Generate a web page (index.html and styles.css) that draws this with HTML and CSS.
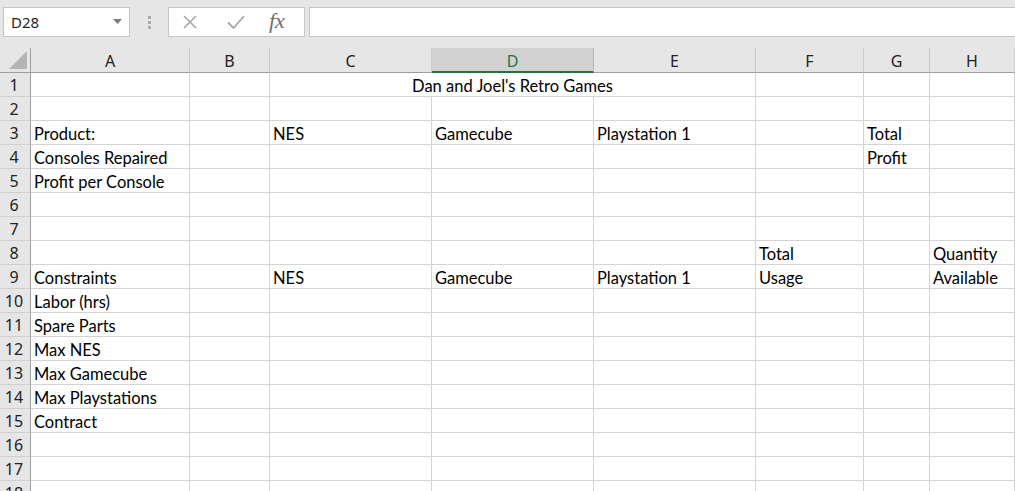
FILE: index.html
```html
<!DOCTYPE html>
<html>
<head>
<meta charset="utf-8">
<link rel="stylesheet" href="styles.css">
</head>
<body>
<div class="app">
  <div class="fbar">
    <div class="namebox">
      <span class="ref">D28</span>
      <svg class="dd" width="9" height="5" viewBox="0 0 9 5"><path d="M0 0H9L4.5 5Z" fill="#7a7a7a"/></svg>
    </div>
    <div class="grip"><i></i><i></i><i></i></div>
    <div class="fbtns">
      <svg class="ic" width="16" height="16" viewBox="0 0 16 16"><path d="M2 2L14 14M14 2L2 14" stroke="#a6a6a6" stroke-width="1.6" fill="none"/></svg>
      <svg class="ic" width="18" height="16" viewBox="0 0 18 16"><path d="M1 8.5L6.5 14L17 2" stroke="#a6a6a6" stroke-width="1.8" fill="none"/></svg>
      <span class="fx">fx</span>
    </div>
    <div class="finput"></div>
  </div>
  <div class="sheet">
    <div class="corner"><svg width="18" height="18" viewBox="0 0 18 18"><path d="M18 0V18H0Z" fill="#b4b4b4"/></svg></div>
    <div class="ch">A</div><div class="ch">B</div><div class="ch">C</div><div class="ch sel">D</div><div class="ch">E</div><div class="ch">F</div><div class="ch">G</div><div class="ch last">H</div>

    <div class="rh">1</div><div class="c"></div><div class="c"></div><div class="c title">Dan and Joel's Retro Games</div><div class="c"></div><div class="c"></div><div class="c last"></div>
    <div class="rh">2</div><div class="c"></div><div class="c"></div><div class="c"></div><div class="c"></div><div class="c"></div><div class="c"></div><div class="c"></div><div class="c last"></div>
    <div class="rh">3</div><div class="c">Product:</div><div class="c"></div><div class="c">NES</div><div class="c">Gamecube</div><div class="c">Playstation 1</div><div class="c"></div><div class="c">Total</div><div class="c last"></div>
    <div class="rh">4</div><div class="c">Consoles Repaired</div><div class="c"></div><div class="c"></div><div class="c"></div><div class="c"></div><div class="c"></div><div class="c">Profit</div><div class="c last"></div>
    <div class="rh">5</div><div class="c">Profit per Console</div><div class="c"></div><div class="c"></div><div class="c"></div><div class="c"></div><div class="c"></div><div class="c"></div><div class="c last"></div>
    <div class="rh">6</div><div class="c"></div><div class="c"></div><div class="c"></div><div class="c"></div><div class="c"></div><div class="c"></div><div class="c"></div><div class="c last"></div>
    <div class="rh">7</div><div class="c"></div><div class="c"></div><div class="c"></div><div class="c"></div><div class="c"></div><div class="c"></div><div class="c"></div><div class="c last"></div>
    <div class="rh">8</div><div class="c"></div><div class="c"></div><div class="c"></div><div class="c"></div><div class="c"></div><div class="c">Total</div><div class="c"></div><div class="c last">Quantity</div>
    <div class="rh">9</div><div class="c">Constraints</div><div class="c"></div><div class="c">NES</div><div class="c">Gamecube</div><div class="c">Playstation 1</div><div class="c">Usage</div><div class="c"></div><div class="c last">Available</div>
    <div class="rh">10</div><div class="c">Labor (hrs)</div><div class="c"></div><div class="c"></div><div class="c"></div><div class="c"></div><div class="c"></div><div class="c"></div><div class="c last"></div>
    <div class="rh">11</div><div class="c">Spare Parts</div><div class="c"></div><div class="c"></div><div class="c"></div><div class="c"></div><div class="c"></div><div class="c"></div><div class="c last"></div>
    <div class="rh">12</div><div class="c">Max NES</div><div class="c"></div><div class="c"></div><div class="c"></div><div class="c"></div><div class="c"></div><div class="c"></div><div class="c last"></div>
    <div class="rh">13</div><div class="c">Max Gamecube</div><div class="c"></div><div class="c"></div><div class="c"></div><div class="c"></div><div class="c"></div><div class="c"></div><div class="c last"></div>
    <div class="rh">14</div><div class="c">Max Playstations</div><div class="c"></div><div class="c"></div><div class="c"></div><div class="c"></div><div class="c"></div><div class="c"></div><div class="c last"></div>
    <div class="rh">15</div><div class="c">Contract</div><div class="c"></div><div class="c"></div><div class="c"></div><div class="c"></div><div class="c"></div><div class="c"></div><div class="c last"></div>
    <div class="rh">16</div><div class="c"></div><div class="c"></div><div class="c"></div><div class="c"></div><div class="c"></div><div class="c"></div><div class="c"></div><div class="c last"></div>
    <div class="rh">17</div><div class="c"></div><div class="c"></div><div class="c"></div><div class="c"></div><div class="c"></div><div class="c"></div><div class="c"></div><div class="c last"></div>
    <div class="rh">18</div><div class="c"></div><div class="c"></div><div class="c"></div><div class="c"></div><div class="c"></div><div class="c"></div><div class="c"></div><div class="c last"></div>
  </div>
</div>
</body>
</html>
```
FILE: styles.css
```css
* { box-sizing: border-box; }
html, body { margin: 0; padding: 0; }
body {
  width: 1015px;
  height: 491px;
  overflow: hidden;
  background: #ffffff;
  font-family: "Noto Sans", "Open Sans", sans-serif;
}
.app { width: 1015px; }
.fbar {
  height: 48px;
  background: #e6e6e6;
  display: flex;
  align-items: flex-start;
  padding-top: 7px;
  padding-left: 3px;
}
.namebox {
  width: 127px;
  height: 30px;
  background: #fff;
  border: 1px solid #c6c6c6;
  display: flex;
  align-items: center;
  justify-content: space-between;
  padding: 0 7px 0 7px;
}
.ref { font-size: 15px; color: #262626; font-family: "Noto Sans", sans-serif; }
.dd { margin-top: -1px; }
.grip {
  width: 38px;
  height: 30px;
  display: flex;
  flex-direction: column;
  align-items: center;
  justify-content: center;
  gap: 2px;
}
.grip i { display: block; width: 3px; height: 3px; background: #aaa; }
.fbtns {
  width: 137px;
  height: 30px;
  background: #fff;
  border: 1px solid #c6c6c6;
  display: flex;
  align-items: center;
  padding-left: 13px;
}
.fbtns .ic:first-child { margin-right: 29px; }
.fbtns .ic:nth-child(2) { margin-right: 24px; }
.fx {
  font-family: "Liberation Serif", "DejaVu Serif", serif;
  font-style: italic;
  font-size: 22px;
  color: #6e6e6e;
  letter-spacing: 0;
  margin-top: -3px;
}
.finput {
  margin-left: 4px;
  flex: 1;
  height: 30px;
  background: #fff;
  border: 1px solid #c6c6c6;
  border-right: none;
}
.sheet {
  display: grid;
  grid-template-columns: 31px 159px 80px 162px 162px 162px 108px 66px 85px;
  grid-template-rows: 25px repeat(18, 24px);
  font-family: "Lato", "Open Sans", sans-serif;
  font-size: 16.5px;
  color: #000;
}
.corner {
  background: #e6e6e6;
  border-right: 1px solid #9e9e9e;
  border-bottom: 1px solid #9e9e9e;
  display: flex;
  align-items: flex-end;
  justify-content: flex-end;
  padding: 0 3px 3px 0;
}
.ch {
  background: #e6e6e6;
  border-bottom: 1px solid #9e9e9e;
  border-right: 1px solid #c9c9c9;
  display: flex;
  align-items: center;
  justify-content: center;
  font-family: "Noto Sans", "Open Sans", sans-serif;
  font-size: 16px;
  color: #222;
  padding-top: 1px;
  background-clip: padding-box;
}
.ch.sel {
  background: #d2d2d2;
  border-bottom: 2px solid #217346;
  color: #217346;
  border-right-color: #b4b4b4;
  padding-top: 2px;
}
.ch.last { border-right-color: #c9c9c9; }
.rh {
  background: #e6e6e6;
  border-right: 1px solid #9e9e9e;
  border-bottom: 1px solid #cfcfcf;
  display: flex;
  align-items: center;
  justify-content: center;
  font-family: "Noto Sans", "Open Sans", sans-serif;
  font-size: 16px;
  color: #222;
  padding-right: 2px;
}
.c {
  border-right: 1px solid #d4d4d4;
  border-bottom: 1px solid #d4d4d4;
  display: flex;
  align-items: center;
  padding-left: 3px;
  padding-top: 2px;
  white-space: nowrap;
  overflow: visible;
}
.c.title {
  grid-column: span 3;
  justify-content: center;
  padding-left: 0;
}
```
